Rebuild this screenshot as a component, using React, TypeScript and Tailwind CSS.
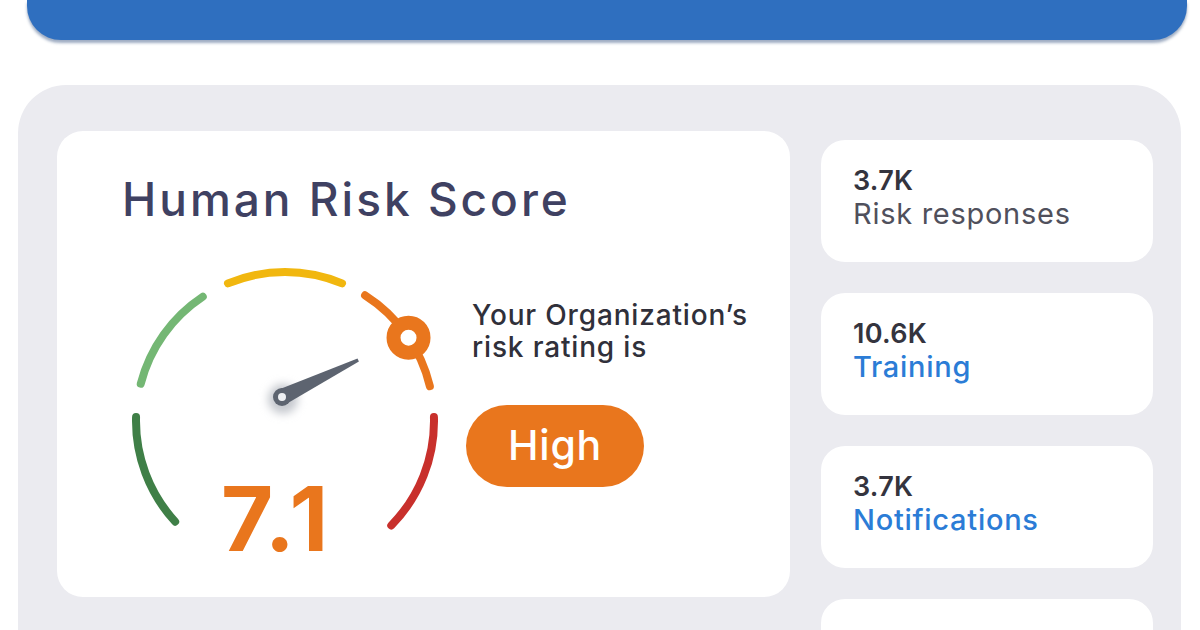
import React from "react";

const CX = 285;
const CY = 421;
const R = 149;

function pt(deg: number) {
  const a = (deg * Math.PI) / 180;
  return [CX + R * Math.cos(a), CY - R * Math.sin(a)];
}

function arc(from: number, to: number) {
  const [x1, y1] = pt(from);
  const [x2, y2] = pt(to);
  return `M ${x1.toFixed(2)} ${y1.toFixed(2)} A ${R} ${R} 0 0 1 ${x2.toFixed(2)} ${y2.toFixed(2)}`;
}

const segments = [
  { from: 222.5, to: 178.5, color: "#3f7f47" },
  { from: 165.5, to: 123.5, color: "#74b774" },
  { from: 112.5, to: 67.5, color: "#f1b70f" },
  { from: 57.5, to: 13.5, color: "#e9761d" },
  { from: 1.5, to: -44.5, color: "#c8302c" },
];

const stats = [
  { value: "3.7K", label: "Risk responses", blue: false },
  { value: "10.6K", label: "Training", blue: true },
  { value: "3.7K", label: "Notifications", blue: true },
  { value: "", label: "", blue: false },
];

function Gauge() {
  const [kx, ky] = pt(34);
  return (
    <div className="relative w-[350px] h-[320px] shrink-0">
      <svg width="350" height="320" viewBox="110 250 350 320">
        <defs>
          <filter id="glow" x="-50%" y="-50%" width="200%" height="200%">
            <feGaussianBlur stdDeviation="4" />
          </filter>
        </defs>
        {segments.map((s) => (
          <path
            key={s.color}
            d={arc(s.from, s.to)}
            fill="none"
            stroke={s.color}
            strokeWidth="8"
            strokeLinecap="round"
          />
        ))}
        {/* knob on the orange segment */}
        <circle cx={kx} cy={ky} r="15" fill="#ffffff" stroke="#e9761d" strokeWidth="14" />
        {/* needle */}
        <circle cx="283" cy="399" r="15" fill="#c6c9cf" filter="url(#glow)" />
        <polygon points="278.2,389.8 285.8,404.2 358.9,361.4 357.5,358.6" fill="#5d6470" />
        <circle cx="282" cy="397" r="9" fill="#5d6470" />
        <circle cx="282" cy="397" r="4" fill="#eef0f3" />
      </svg>
      <div className="absolute left-[111px] top-[224px] text-[90px] leading-none font-bold text-[#e9761d] tracking-[0.03em]">
        7.1
      </div>
    </div>
  );
}

export default function App() {
  return (
    <div
      className="w-[1200px] h-[630px] overflow-hidden bg-white"
      style={{ fontFamily: "Inter, 'Noto Sans', sans-serif" }}
    >
      {/* top banner */}
      <div className="ml-[27px] w-[1160px] h-[40px] bg-[#2f6fbf] rounded-b-[34px] shadow-[0_3px_3px_rgba(40,70,120,0.45)]" />

      {/* main panel */}
      <div className="mt-[45px] ml-[18px] w-[1163px] h-[700px] bg-[#ebebf0] rounded-[48px] pt-[46px] pl-[39px] flex gap-[31px]">
        <div className="w-[733px] h-[466px] bg-white rounded-[26px] shrink-0">
          <h1 className="ml-[65px] mt-[45px] text-[46px] leading-none font-medium text-[#3f4162] tracking-[0.065em]">
            Human Risk Score
          </h1>
          <div className="flex mt-[28px] ml-[53px]">
            <Gauge />
            <div className="ml-[12px] mt-[49px] flex flex-col items-start">
              <p className="text-[28px] leading-[32px] font-medium text-[#30303a] tracking-[0.03em]">
                Your Organization’s
                <br />
                risk rating is
              </p>
              <div className="mt-[42px] -ml-[6px] w-[178px] h-[82px] rounded-full bg-[#e9761d] flex items-center justify-center text-white text-[41px] font-medium tracking-[0.02em]">
                High
              </div>
            </div>
          </div>
        </div>

        <div className="w-[332px] pt-[9px] flex flex-col gap-[31px] shrink-0">
          {stats.map((s, i) => (
            <div
              key={i}
              className="h-[122px] bg-white rounded-[24px] pl-[32px] pb-[8px] flex flex-col justify-center gap-[5px]"
            >
              {s.value && (
                <>
                  <div className="text-[27px] leading-none font-semibold text-[#34343e] tracking-[0.01em]">
                    {s.value}
                  </div>
                  <div
                    className={
                      s.blue
                        ? "text-[29px] leading-none font-medium text-[#2b7cd6] tracking-[0.025em]"
                        : "text-[29px] leading-none text-[#50505c] tracking-[0.025em]"
                    }
                  >
                    {s.label}
                  </div>
                </>
              )}
            </div>
          ))}
        </div>
      </div>
    </div>
  );
}
